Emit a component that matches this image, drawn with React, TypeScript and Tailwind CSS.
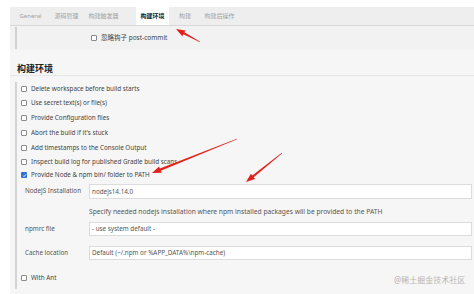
import React from "react"

const font = { fontFamily: '"Noto Sans", "Noto Sans CJK SC", sans-serif' }

function Box({ checked = false }: { checked?: boolean }) {
  return checked ? (
    <span className="w-[6px] h-[6px] rounded-[1px] bg-[#2f6fd6] flex items-center justify-center shrink-0">
      <svg width="5" height="5" viewBox="0 0 10 10">
        <path d="M2 5.2l2 2 4-4.4" stroke="#fff" strokeWidth="1.8" fill="none" />
      </svg>
    </span>
  ) : (
    <span className="w-[6px] h-[6px] rounded-[1px] bg-white border border-[#8a8a8a] shrink-0" />
  )
}

// tapered arrow like the ones drawn on top of the screenshot
function Arrow({ x1, y1, x2, y2 }: { x1: number; y1: number; x2: number; y2: number }) {
  const dx = x2 - x1
  const dy = y2 - y1
  const len = Math.hypot(dx, dy)
  const ux = dx / len
  const uy = dy / len
  const nx = -uy
  const ny = ux
  const headLen = 9
  const bx = x2 - ux * headLen
  const by = y2 - uy * headLen
  const p = (x: number, y: number) => `${x.toFixed(1)},${y.toFixed(1)}`
  const pts = [
    p(x1 + nx * 0.3, y1 + ny * 0.3),
    p(bx + nx * 1.1, by + ny * 1.1),
    p(bx + nx * 3.3, by + ny * 3.3),
    p(x2, y2),
    p(bx - nx * 3.3, by - ny * 3.3),
    p(bx - nx * 1.1, by - ny * 1.1),
    p(x1 - nx * 0.3, y1 - ny * 0.3),
  ]
  return <polygon points={pts.join(" ")} fill="#e3211c" />
}

const tabs = [
  { label: "General", w: "w-[41px]" },
  { label: "源码管理", w: "w-[31px]" },
  { label: "构建触发器", w: "w-[43px]" },
]

const options = [
  { label: "Delete workspace before build starts", h: "h-[14px]" },
  { label: "Use secret text(s) or file(s)", h: "h-[14px]" },
  { label: "Provide Configuration files", h: "h-[15px]" },
  { label: "Abort the build if it's stuck", h: "h-[16px]" },
  { label: "Add timestamps to the Console Output", h: "h-[14px]" },
  { label: "Inspect build log for published Gradle build scans", h: "h-[13px]" },
]

export default function App() {
  return (
    <div className="w-[474px] h-[294px] relative overflow-hidden bg-white" style={font}>
      <div className="pt-[7px] pl-[10px] h-full">
        <div className="h-full bg-[#f6f6f6]">
          {/* tab bar */}
          <div className="h-[19px] flex bg-[#eeeeee] border-b border-[#d8d8d8] text-[6px] text-[#a2a2a2]">
            {tabs.map((t) => (
              <div key={t.label} className={`${t.w} flex items-center justify-center`}>
                {t.label}
              </div>
            ))}
            <div className="ml-[11px] w-[33px] bg-white flex items-center justify-center text-[#222] font-semibold">
              构建环境
            </div>
            <div className="w-[32px] flex items-center justify-center">构建</div>
            <div className="w-[37px] flex items-center justify-center">构建后操作</div>
          </div>

          {/* build triggers tail */}
          <div className="h-[24px] bg-[#f2f2f2] pl-[5px] py-[1px]">
            <div className="h-full border-l-2 border-[#d2d2d2] flex items-center gap-[4px] pl-[74px] text-[6.5px] text-[#444]">
              <Box />
              <span>忽略钩子 post-commit</span>
            </div>
          </div>

          {/* heading */}
          <div className="h-[26px] pt-[12px] pl-[7px] border-b border-[#e6e6e6]">
            <h2 className="text-[9px] leading-[14px] font-bold text-[#222]">构建环境</h2>
          </div>

          {/* build environment */}
          <div className="mt-[6px] ml-[5px] h-[207px] border-l-2 border-[#d4d4d4] text-[6.3px] text-[#444]">
            {options.map((o) => (
              <div key={o.label} className={`${o.h} flex items-center gap-[4px] pl-[4px]`}>
                <Box />
                <span>{o.label}</span>
              </div>
            ))}
            <div className="h-[14px] flex items-center gap-[4px] pl-[4px]">
              <Box checked />
              <span>Provide Node &amp; npm bin/ folder to PATH</span>
            </div>

            <div className="mt-[2px] flex items-start">
              <div className="w-[72px] pl-[8px] pt-[2px] text-[#555]">NodeJS Installation</div>
              <div className="flex-1 h-[15px] mr-[2px] bg-white border border-[#dcdcdc] flex items-center pl-[2px] text-[#555]">
                nodejs14.14.0
              </div>
            </div>
            <div className="h-[22px] pt-[6px] pl-[72px] text-[6.7px] leading-[14px] text-[#555]">
              Specify needed nodejs installation where npm installed packages will be provided to the PATH
            </div>

            <div className="mt-[1px] flex items-center">
              <div className="w-[72px] pl-[8px] text-[#555]">npmrc file</div>
              <div className="flex-1 h-[14px] mr-[2px] bg-white border border-[#dcdcdc] flex items-center pl-[2px] text-[#555]">
                - use system default -
              </div>
            </div>

            <div className="mt-[10px] flex items-center">
              <div className="w-[72px] pl-[8px] text-[#555]">Cache location</div>
              <div className="flex-1 h-[14px] mr-[2px] bg-white border border-[#dcdcdc] flex items-center pl-[2px] text-[#555]">
                Default (~/.npm or %APP_DATA%\npm-cache)
              </div>
            </div>

            <div className="mt-[11px] h-[14px] flex items-center gap-[4px] pl-[4px]">
              <Box />
              <span>With Ant</span>
            </div>
          </div>
        </div>
      </div>

      {/* watermark */}
      <div className="absolute left-[394px] top-[274px] text-[8px] text-[#b5b5b5]">@稀土掘金技术社区</div>

      {/* annotations */}
      <svg className="absolute inset-0 pointer-events-none" width="474" height="294">
        <Arrow x1={200} y1={42} x2={176} y2={29} />
        <Arrow x1={237} y1={139} x2={152} y2={173} />
        <Arrow x1={282} y1={153} x2={246} y2={182} />
      </svg>
    </div>
  )
}
